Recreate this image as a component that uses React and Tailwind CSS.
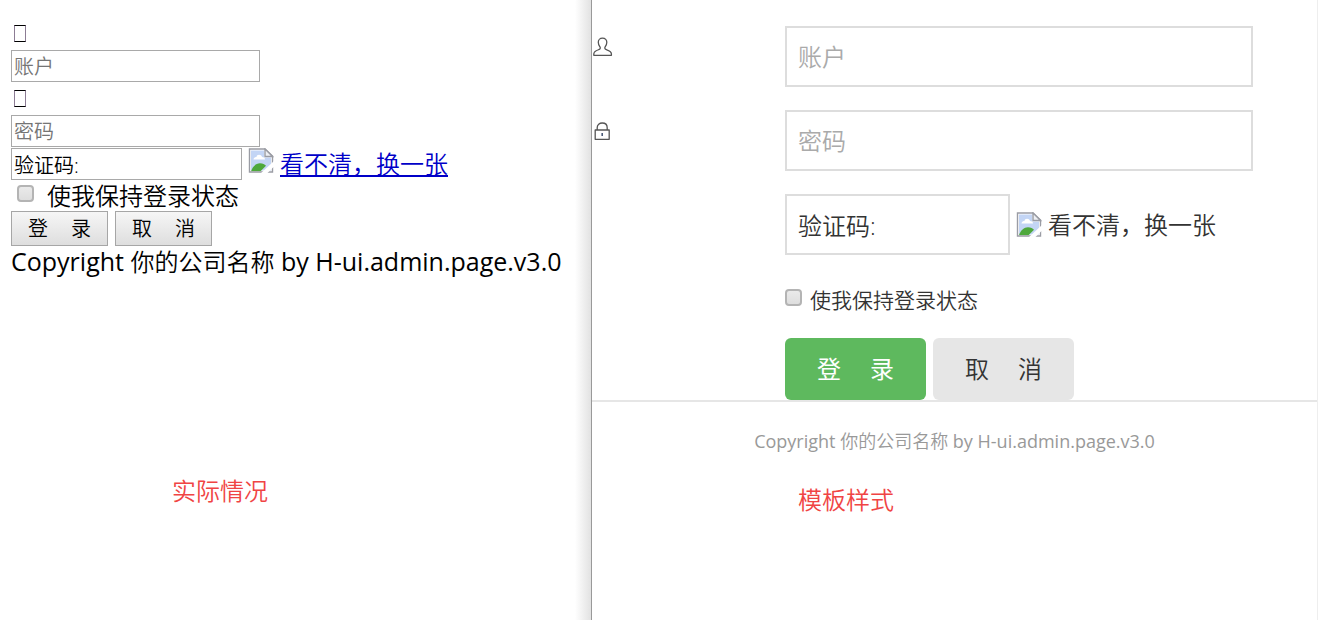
import React from 'react';

function BrokenImage() {
  return (
    <svg role="img" aria-label="验证码图片" className="h-[26px] w-[26px] shrink-0" viewBox="0 0 26 26">
      <path d="M1.500 1h15.500l7.500 7v16h-23z" fill="#fff" />
      <path d="M3 2.500h13v7h7v13H3z" fill="#c3d5f5" />
      <path d="M5.500 11.500c0-2 2-2.500 3-2.500 0-3 5-3 5.500 0 2 0 3 1 3 2.500z" fill="#fff" />
      <path d="M3 23.300c1.500-5 5-8 9-8 3 0 4.500 1 6 2.500L12.500 23.300z" fill="#4ea83c" />
      <path d="M1.500 24V1H17l7.500 7v16z" fill="none" stroke="#9a9ca4" strokeWidth="1.400" />
      <path d="M17 1v7.500h7.500z" fill="#eef0f4" stroke="#9a9ca4" strokeWidth="1.400" />
      <path d="M26 13L12 26h6.500L26 18.500z" fill="#fff" />
    </svg>
  );
}

function UserIcon() {
  return (
    <svg aria-hidden="true" className="h-[20px] w-[20px]" viewBox="0 0 20 20" fill="none" stroke="#555" strokeWidth="1.300" strokeLinejoin="round">
      <path d="M9.500 1.200c-2.700 0-4.200 1.700-4.200 4.100 0 2.300.9 3.400 1.700 4.600.7 1.300.1 2.300-1.400 2.800C3 13.600.8 14.300.8 17v1.300h17.600V17c0-2.700-2.300-3.400-4.900-4.300-1.500-.5-2.100-1.500-1.400-2.800.8-1.200 1.700-2.300 1.700-4.600 0-2.400-1.500-4.100-4.300-4.100z" />
    </svg>
  );
}

function LockIcon() {
  return (
    <svg aria-hidden="true" className="h-[20px] w-[20px]" viewBox="0 0 20 20" fill="none" stroke="#555" strokeWidth="1.300" strokeLinejoin="round">
      <path d="M2.200 9h14v9.300h-14z" />
      <path d="M4.200 9V6.700C4.200 3.700 6.500 2 9.200 2s5 1.700 5 4.700V9" />
      <path d="M9.200 12v3" stroke="#4a5a78" strokeWidth="1.600" />
    </svg>
  );
}

function MissingGlyph() {
  return (
    <div className="flex h-[33px] items-center pl-[3px]">
      <span className="block h-[17px] w-3 border border-x-[#8c7c94] border-y-black" />
    </div>
  );
}

const checkbox =
  'h-[17px] w-[17px] shrink-0 appearance-none rounded-[4px] border-2 border-[#b4b4b4] bg-linear-to-b from-[#eaeaea] to-[#dedede] checked:bg-[#777]';
const plainInput =
  'block h-8 rounded-none border border-[#a9a9a9] bg-white px-0.5 text-[20px] text-black outline-none placeholder:text-[#757575] placeholder:opacity-100';
const plainButton =
  'flex h-[35px] items-center justify-center gap-[23px] border border-[#a6a6a6] bg-linear-to-b from-[#f6f6f6] to-[#dedede] px-4 text-[20px] text-black';
const styledInput =
  'h-[61px] rounded-none border-2 border-[#ddd] bg-white px-[11px] text-[24px] text-[#333] outline-none placeholder:text-[#aaa] placeholder:opacity-100';
const styledButton =
  'flex h-[62px] items-center justify-center gap-[29px] rounded-md px-8 text-[24px]';

function ActualForm() {
  return (
    <section className="flex border-r border-[#999] bg-white font-['Open_Sans','Noto_Sans_CJK_SC',sans-serif] text-[24px] leading-[31px] font-[350] text-black">
      <div className="min-w-0 grow pt-[17px] pl-[11px]">
        <form onSubmit={(e) => e.preventDefault()}>
          <MissingGlyph />
          <input aria-label="账户" type="text" placeholder="账户" className={`${plainInput} w-[249px]`} />
          <MissingGlyph />
          <input aria-label="密码" type="password" placeholder="密码" className={`${plainInput} w-[249px]`} />
          <div className="mt-px flex items-start">
            <input aria-label="验证码" type="text" defaultValue="验证码:" className={`${plainInput} mr-[6px] w-[231px]`} />
            <BrokenImage />
            <a href="#refresh" className="ml-[6px] whitespace-nowrap text-[#0000c8] underline underline-offset-2">看不清，换一张</a>
          </div>
          <label className="flex h-[31px] items-center gap-[13px] pl-[6px] whitespace-nowrap">
            <input type="checkbox" className={`${checkbox} mb-1`} />
            使我保持登录状态
          </label>
          <div className="flex gap-[7px]">
            <button type="submit" className={plainButton}><span>登</span><span>录</span></button>
            <button type="reset" className={plainButton}><span>取</span><span>消</span></button>
          </div>
        </form>
        <p className="text-[25px] font-normal whitespace-nowrap">Copyright <span className="text-[24px] font-[350]">你的公司名称</span> by H-ui.admin.page.v3.0</p>
        <p className="mt-[198px] pl-[161px] text-[#f04444]">实际情况</p>
      </div>
      <div className="w-4 shrink-0 bg-linear-to-r from-white to-[#e2e2e2]" />
    </section>
  );
}

function TemplateForm() {
  return (
    <section className="border-r border-[#eee] bg-white font-['Open_Sans','Noto_Sans_CJK_SC',sans-serif] text-[24px] font-[350] text-[#333]">
      <form onSubmit={(e) => e.preventDefault()} className="border-b-2 border-[#e6e6e6] pt-[26px]">
        <div className="flex flex-col gap-[23px]">
          <div className="flex items-start pr-16">
            <span className="w-[193px] shrink-0 pt-[11px] pl-px"><UserIcon /></span>
            <input aria-label="账户" type="text" placeholder="账户" className={`${styledInput} min-w-0 grow`} />
          </div>
          <div className="flex items-start pr-16">
            <span className="w-[193px] shrink-0 pt-[11px] pl-px"><LockIcon /></span>
            <input aria-label="密码" type="password" placeholder="密码" className={`${styledInput} min-w-0 grow`} />
          </div>
          <div className="flex items-center pl-[193px]">
            <input aria-label="验证码" type="text" defaultValue="验证码:" className={`${styledInput} mr-[6px] w-[225px]`} />
            <BrokenImage />
            <a href="#refresh" className="ml-[6px] whitespace-nowrap">看不清，换一张</a>
          </div>
          <label className="flex h-[37px] items-start gap-2 pl-[193px] text-[21px] leading-[45px] whitespace-nowrap">
            <input type="checkbox" className={`${checkbox} mt-[11px]`} />
            使我保持登录状态
          </label>
          <div className="flex gap-[7px] pl-[193px]">
            <button type="submit" className={`${styledButton} bg-[#5eb95e] font-normal text-white`}><span>登</span><span>录</span></button>
            <button type="reset" className={`${styledButton} bg-[#e6e6e6] text-[#333]`}><span>取</span><span>消</span></button>
          </div>
        </div>
      </form>
      <p className="pt-[26px] text-center text-[18px] leading-[26px] font-normal whitespace-nowrap text-[#999]">Copyright <span className="font-[350]">你的公司名称</span> by H-ui.admin.page.v3.0</p>
      <p className="mt-[29px] pl-[206px] leading-[33px] text-[#f04444]">模板样式</p>
    </section>
  );
}

export default function App() {
  return (
    <main className="grid min-h-screen grid-cols-[592fr_726fr] bg-white">
      <ActualForm />
      <TemplateForm />
    </main>
  );
}
